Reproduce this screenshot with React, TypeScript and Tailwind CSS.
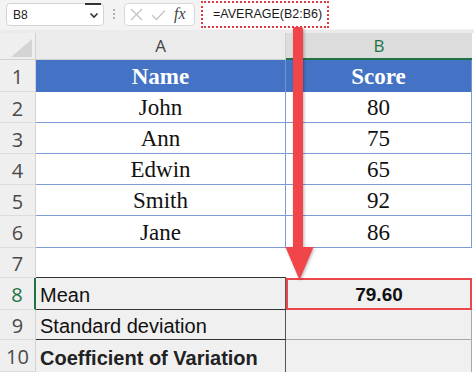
import React from "react";

const SERIF = { fontFamily: '"Liberation Serif", "Times New Roman", serif' };
const SANS = { fontFamily: '"Liberation Sans", Arial, sans-serif' };
const OPEN = { fontFamily: '"Open Sans", "Noto Sans", sans-serif' };

type Row = {
  n: number;
  h: string;
  a: string;
  b: string;
};

const data: Row[] = [
  { n: 2, h: "h-[31px]", a: "John", b: "80" },
  { n: 3, h: "h-[31px]", a: "Ann", b: "75" },
  { n: 4, h: "h-[31px]", a: "Edwin", b: "65" },
  { n: 5, h: "h-[31px]", a: "Smith", b: "92" },
  { n: 6, h: "h-[32px]", a: "Jane", b: "86" },
];

function RowHead({ n, h, selected }: { n: number; h: string; selected?: boolean }) {
  return (
    <div
      className={`${h} flex items-center justify-center bg-[#efefef] border-b border-[#dcdcdc] ${
        selected ? "border-r-2 border-r-[#217346] text-[#217346]" : "border-r border-r-[#d2d2d2] text-[#4a4a4a]"
      } text-[20px] leading-none pt-[3px]`}
      style={OPEN}
    >
      {n}
    </div>
  );
}

export default function App() {
  return (
    <div className="w-[474px] h-[372px] relative overflow-hidden bg-white">
      {/* Toolbar */}
      <div className="h-[30px] flex items-start bg-[#f3f3f3]">
        <div className="ml-[6px] mt-[3px] w-[98px] h-[23px] bg-white border border-[#d3d3d3] rounded-[4px] flex items-center justify-between pl-[6px] pr-[4px] relative">
          <span className="text-[12px] text-[#222]" style={SANS}>
            B8
          </span>
          <svg width="10" height="7" viewBox="0 0 10 7" className="mt-[1px]">
            <path d="M1.5 1.5 L5 5 L8.5 1.5" fill="none" stroke="#333" strokeWidth="1.6" />
          </svg>
          <div className="absolute right-[2px] top-[-1px] w-[16px] h-[2px] bg-[#333]" />
        </div>
        <div className="w-[20px] h-[28px] flex flex-col items-center justify-center gap-[2px]">
          <div className="w-[2px] h-[2px] rounded-full bg-[#9a9a9a]" />
          <div className="w-[2px] h-[2px] rounded-full bg-[#9a9a9a]" />
          <div className="w-[2px] h-[2px] rounded-full bg-[#9a9a9a]" />
        </div>
        <div className="mt-[3px] w-[71px] h-[23px] bg-white border border-[#d8d8d8] rounded-[4px] flex items-center pl-[5px] gap-[8px]">
          <svg width="13" height="13" viewBox="0 0 13 13">
            <path d="M1 1 L12 12 M12 1 L1 12" stroke="#c4c4c4" strokeWidth="1.3" fill="none" />
          </svg>
          <svg width="15" height="12" viewBox="0 0 15 12">
            <path d="M1 6 L5.5 10.5 L14 1.5" stroke="#c4c4c4" strokeWidth="1.3" fill="none" />
          </svg>
          <span className="italic text-[16px] text-[#444] leading-none -mt-[2px]" style={SERIF}>
            fx
          </span>
        </div>
        <div className="ml-[5px] flex-1 h-[29px] bg-white">
          <div className="mt-[1px] ml-[1px] w-[128px] h-[27px] border-2 border-dotted border-[#e03a3e] flex items-center pl-[10px] text-[12.5px] text-[#1a1a1a]" style={SANS}>
            =AVERAGE(B2:B6)
          </div>
        </div>
      </div>
      <div className="h-[3px] bg-[#ebebeb]" />

      {/* Grid */}
      <div className="grid grid-cols-[36px_250px_186px]">
        {/* header row */}
        <div className="h-[27px] bg-[#efefef] border-r border-[#d2d2d2] border-b border-b-[#d2d2d2] flex items-end justify-end pr-[3px] pb-[2px]">
          <svg width="21" height="18" viewBox="0 0 21 18">
            <polygon points="21,0 21,18 0,18" fill="#d4d4d4" />
          </svg>
        </div>
        <div className="h-[27px] bg-[#ebebeb] border-r border-[#d0d0d0] border-b border-b-[#d0d0d0] flex items-center justify-center text-[17px] text-[#444]" style={OPEN}>
          A
        </div>
        <div className="h-[27px] bg-[#dcdcdc] border-b-2 border-[#217346] flex items-center justify-center text-[17px] text-[#217346]" style={OPEN}>
          B
        </div>

        {/* row 1 */}
        <RowHead n={1} h="h-[32px]" />
        <div className="h-[32px] bg-[#4472c4] border-r border-[#7393d2] flex items-center justify-center pt-[3px] text-white font-bold text-[23px]" style={SERIF}>
          Name
        </div>
        <div className="h-[32px] bg-[#4472c4] border-r border-[#7393d2] flex items-center justify-center pt-[3px] text-white font-bold text-[23px]" style={SERIF}>
          Score
        </div>

        {data.map((r) => (
          <React.Fragment key={r.n}>
            <RowHead n={r.n} h={r.h} />
            <div className={`${r.h} border-r border-b border-[#7f9bd6] flex items-center justify-center pt-[3px] text-[23px] text-[#111]`} style={SERIF}>
              {r.a}
            </div>
            <div className={`${r.h} border-r border-b border-[#7f9bd6] flex items-center justify-center pt-[3px] text-[23px] text-[#111]`} style={SERIF}>
              {r.b}
            </div>
          </React.Fragment>
        ))}

        {/* row 7 */}
        <RowHead n={7} h="h-[30px]" />
        <div className="h-[30px] border-b border-[#333]" />
        <div className="h-[30px]" />

        {/* row 8 */}
        <RowHead n={8} h="h-[32px]" selected />
        <div className="h-[32px] bg-[#f0f0f0] border-r border-r-[#555] border-b border-b-[#333] flex items-center pl-[4px] pt-[3px] text-[20px] text-[#111]" style={SANS}>
          Mean
        </div>
        <div className="h-[32px] bg-[#f0f0f0] border-2 border-[#e8474c] flex items-center justify-center pt-[2px] font-bold text-[19px] text-[#111]" style={SANS}>
          79.60
        </div>

        {/* row 9 */}
        <RowHead n={9} h="h-[30px]" />
        <div className="h-[30px] bg-[#f0f0f0] border-r border-r-[#555] border-b border-b-[#333] flex items-center pl-[4px] pt-[3px] text-[20px] text-[#111]" style={SANS}>
          Standard deviation
        </div>
        <div className="h-[30px] bg-[#f0f0f0] border-r border-b border-[#a8a8a8]" />

        {/* row 10 */}
        <RowHead n={10} h="h-[32px]" />
        <div className="h-[32px] bg-[#f0f0f0] border-r border-r-[#555] flex items-center pl-[4px] pt-[3px] font-bold text-[20px] text-[#222] whitespace-nowrap overflow-visible" style={SANS}>
          Coefficient of Variation
        </div>
        <div className="h-[32px] bg-[#f0f0f0] border-r border-[#a8a8a8]" />
      </div>

      {/* Arrow overlay */}
      <svg
        className="absolute left-0 top-0 pointer-events-none"
        width="474"
        height="372"
        viewBox="0 0 474 372"
        style={{ filter: "drop-shadow(1px 1px 1.5px rgba(0,0,0,0.3))" }}
      >
        <rect x="293" y="27" width="10" height="222" rx="2" fill="#f2454a" />
        <polygon points="285.5,247 313.5,247 299.5,280" fill="#f2454a" />
      </svg>
    </div>
  );
}
